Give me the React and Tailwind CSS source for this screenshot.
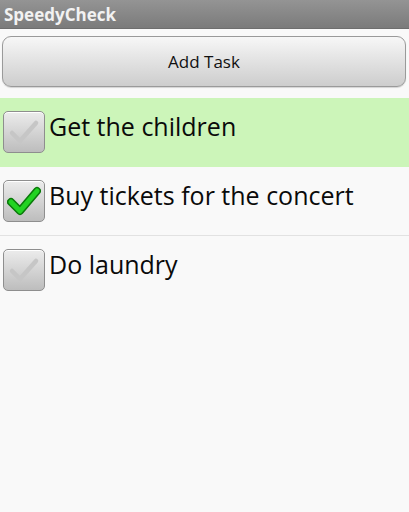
import React, { useState } from "react";

const tasks = [
  { id: 1, label: "Get the children", done: false, active: true },
  { id: 2, label: "Buy tickets for the concert", done: true, active: false },
  { id: 3, label: "Do laundry", done: false, active: false },
];

function CheckBox({ checked }) {
  return (
    <div className="w-[42px] h-[42px] shrink-0 rounded-[5px] border border-[#8e8e8e] bg-gradient-to-b from-[#ececec] to-[#bdbdbd] flex items-center justify-center shadow-[inset_0_1px_0_#fff]">
      {checked ? (
        <svg width="34" height="30" viewBox="0 0 34 30">
          <path d="M4 16 L13 25 L30 5" fill="none" stroke="#0a7a0a" strokeWidth="8" strokeLinecap="round" strokeLinejoin="round" />
          <path d="M4 16 L13 25 L30 5" fill="none" stroke="#22d322" strokeWidth="5" strokeLinecap="round" strokeLinejoin="round" />
        </svg>
      ) : (
        <svg width="34" height="30" viewBox="0 0 34 30">
          <path d="M5 16 L13 24 L29 6" fill="none" stroke="#c6c6c6" strokeWidth="4.5" strokeLinecap="round" strokeLinejoin="round" />
        </svg>
      )}
    </div>
  );
}

export default function App() {
  const [items, setItems] = useState(tasks);

  return (
    <div className="w-[409px] h-[512px] bg-[#f9f9f9] font-['Open_Sans',_'Liberation_Sans',_sans-serif] overflow-hidden">
      {/* Title bar */}
      <div className="h-[29px] bg-gradient-to-b from-[#949494] to-[#7b7b7b] flex items-center px-[4px] border-b border-[#6e6e6e]">
        <span className="text-[#f2f2f2] text-[17px] font-bold leading-none">SpeedyCheck</span>
      </div>

      {/* Add button */}
      <div className="px-[2px] pt-[7px] pb-[11px]">
        <button className="w-[404px] h-[51px] rounded-[9px] border border-[#9a9a9a] bg-gradient-to-b from-[#f7f7f7] to-[#cdcdcd] text-[17px] text-[#111] shadow-[0_1px_1px_rgba(0,0,0,0.15)]">
          Add Task
        </button>
      </div>

      {/* Task list */}
      <div>
        {items.map((t, idx) => (
          <div
            key={t.id}
            onClick={() =>
              setItems(items.map((i) => (i.id === t.id ? { ...i, done: !i.done } : i)))
            }
            className={`h-[69px] flex items-center gap-[4px] px-[3px] border-b ${
              t.active
                ? "bg-[#ccf5b9] border-transparent"
                : idx === items.length - 1
                ? "border-transparent"
                : "border-[#e2e2e2]"
            }`}
          >
            <CheckBox checked={t.done} />
            <span className="text-[25px] text-[#0a0a0a] leading-none -mt-[12px]">{t.label}</span>
          </div>
        ))}
      </div>
    </div>
  );
}
